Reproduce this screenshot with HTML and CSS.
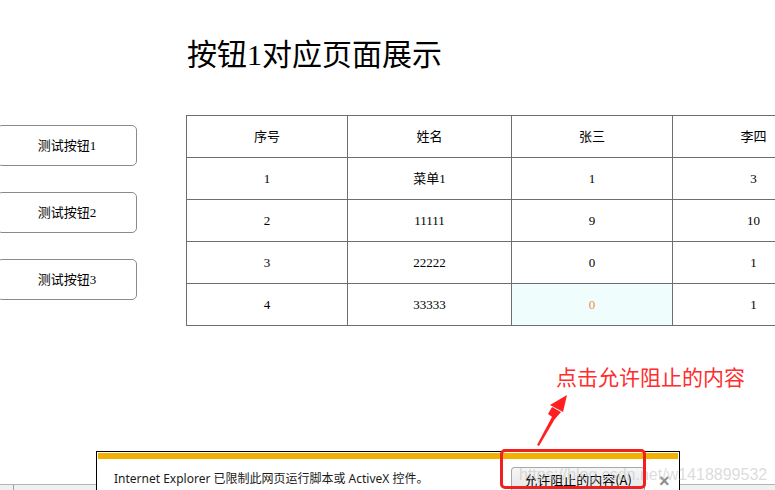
FILE: index.html
```html
<!DOCTYPE html>
<html lang="zh-CN">
<head>
<meta charset="utf-8">
<title>按钮1对应页面展示</title>
<link rel="stylesheet" href="styles.css">
</head>
<body>
<div class="page">
  <div class="sidebar">
    <button class="side-btn">测试按钮1</button>
    <button class="side-btn">测试按钮2</button>
    <button class="side-btn">测试按钮3</button>
  </div>
  <div class="main">
    <h1 class="title">按钮1对应页面展示</h1>
    <table class="grid">
      <colgroup>
        <col class="c1"><col class="c2"><col class="c3"><col class="c4">
      </colgroup>
      <tr><td>序号</td><td>姓名</td><td>张三</td><td>李四</td></tr>
      <tr><td>1</td><td>菜单1</td><td>1</td><td>3</td></tr>
      <tr><td>2</td><td>11111</td><td>9</td><td>10</td></tr>
      <tr><td>3</td><td>22222</td><td>0</td><td>1</td></tr>
      <tr><td>4</td><td>33333</td><td class="hl">0</td><td>1</td></tr>
    </table>
  </div>
</div>

<div class="statusbar"><span class="tick"></span></div>

<div class="notify">
  <div class="notify-stripe"></div>
  <div class="notify-body">
    <span class="notify-text">Internet Explorer 已限制此网页运行脚本或 ActiveX 控件。</span>
    <span class="allow-btn">允许阻止的内容(A)</span>
    <span class="close">×</span>
  </div>
</div>

<div class="watermark">https://blog.csdn.net/w1418899532</div>

<div class="annot-text">点击允许阻止的内容</div>
<svg class="annot-arrow" width="60" height="60" viewBox="0 0 60 60">
  <polygon points="17,50 33,20 36,22 19,51" fill="#ff2020"/>
  <polygon points="47,0 30,10 43,17" fill="#ff2020"/>
  <polygon points="32,12 41,17 35,24 28,19" fill="#ff2020"/>
</svg>
<div class="annot-box"></div>
</body>
</html>
```
FILE: styles.css
```css
html, body {
  margin: 0;
  padding: 0;
  width: 775px;
  height: 490px;
  overflow: hidden;
  background: #ffffff;
}
body {
  position: relative;
  font-family: "Liberation Serif", "Noto Sans CJK SC", serif;
  color: #000;
}
.page {
  display: flex;
  align-items: flex-start;
}
.sidebar {
  display: flex;
  flex-direction: column;
  gap: 26px;
  margin-left: -3px;
  padding-top: 125px;
  width: 140px;
  flex: none;
}
.side-btn {
  width: 140px;
  height: 41px;
  background: #ffffff;
  border: 1px solid #8a8a8a;
  border-radius: 5px;
  font-family: "Liberation Serif", "Noto Sans CJK SC", serif;
  font-size: 13px;
  color: #000;
  padding: 0 0 2px 0;
}
.main {
  margin-left: 49px;
  flex: none;
}
.title {
  margin: 33px 0 0 1px;
  font-size: 30px;
  line-height: 44px;
  font-weight: normal;
  font-family: "Liberation Serif", "Noto Sans CJK SC", serif;
  white-space: nowrap;
}
.grid {
  margin-top: 38px;
  border-collapse: collapse;
  table-layout: fixed;
  width: 648px;
}
.c1 { width: 161px; }
.c2 { width: 164px; }
.c3 { width: 161px; }
.c4 { width: 162px; }
.grid td {
  border: 1px solid #6e6e6e;
  height: 41px;
  padding: 0;
  text-align: center;
  vertical-align: middle;
  font-size: 13px;
  line-height: 14px;
}
.grid td.hl {
  background: #effdfc;
  color: #f08a4a;
}
.statusbar {
  position: absolute;
  left: 0;
  top: 484px;
  width: 775px;
  height: 6px;
  background: #f0f0f0;
  border-top: 1px solid #b4b4b4;
}
.tick {
  position: absolute;
  left: 13px;
  top: 0;
  width: 1px;
  height: 6px;
  background: #a0a0a0;
}
.notify {
  position: absolute;
  left: 96px;
  top: 451px;
  width: 582px;
  height: 45px;
  border: 1px solid #000;
  background: #ffffff;
}
.notify-stripe {
  margin: 1px 0 0 1px;
  width: 580px;
  height: 6px;
  background: #f2b000;
}
.notify-body {
  display: flex;
  align-items: flex-start;
  padding-top: 8px;
  position: relative;
}
.notify-text {
  margin-left: 17px;
  margin-top: 4px;
  font-family: "Noto Sans", "Noto Sans CJK SC", sans-serif;
  font-size: 12px;
  line-height: 16px;
  color: #1a1a1a;
  white-space: nowrap;
  width: 397px;
  flex: none;
}
.allow-btn {
  flex: none;
  width: 134px;
  height: 26px;
  box-sizing: border-box;
  border: 1px solid #a8a8a8;
  border-bottom: none;
  border-radius: 4px 4px 0 0;
  background: linear-gradient(#f6f6f6, #e4e4e4);
  font-family: "Noto Sans CJK SC", sans-serif;
  font-size: 13px;
  line-height: 24px;
  padding-top: 0;
  text-align: center;
  color: #000;
}
.close {
  flex: none;
  margin-left: 14px;
  margin-top: 4px;
  font-family: "Liberation Sans", sans-serif;
  font-size: 18px;
  line-height: 20px;
  color: #8c8c8c;
  font-weight: bold;
}
.watermark {
  position: absolute;
  left: 519px;
  top: 463px;
  font-family: "Liberation Sans", sans-serif;
  font-size: 16px;
  line-height: 24px;
  color: rgba(190, 190, 190, 0.55);
  white-space: nowrap;
}
.annot-text {
  position: absolute;
  left: 556px;
  top: 362px;
  font-family: "Noto Sans CJK SC", sans-serif;
  font-size: 21px;
  line-height: 28px;
  color: #ff2d2d;
  white-space: nowrap;
}
.annot-arrow {
  position: absolute;
  left: 520px;
  top: 395px;
}
.annot-box {
  position: absolute;
  left: 500px;
  top: 449px;
  width: 140px;
  height: 34px;
  border: 3px solid #f02020;
  border-radius: 5px;
}
```
